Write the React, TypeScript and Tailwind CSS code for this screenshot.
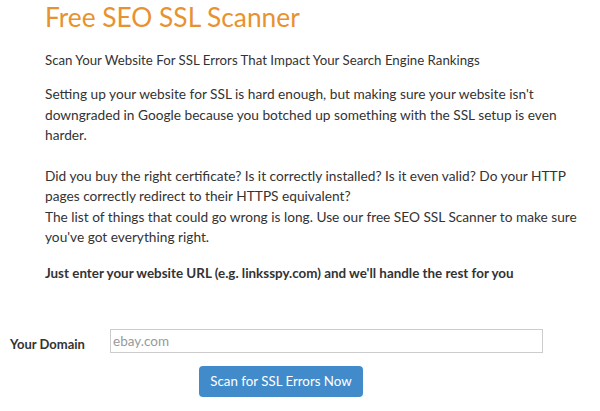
import React from "react";

export default function App() {
  return (
    <div className="w-[600px] h-[411px] bg-white overflow-hidden text-[#333333]" style={{ fontFamily: "Lato, 'Open Sans', sans-serif" }}>
      <div className="pl-[45px] whitespace-nowrap">
        <h1 className="text-[26.3px] leading-[34px] text-[#e8922f] font-normal">Free SEO SSL Scanner</h1>
        <p className="mt-[17px] text-[13.25px] leading-[18px]">Scan Your Website For SSL Errors That Impact Your Search Engine Rankings</p>
        <p className="mt-[15px] text-[13.7px] leading-[20.5px]">
          Setting up your website for SSL is hard enough, but making sure your website isn't
          <br />
          downgraded in Google because you botched up something with the SSL setup is even
          <br />
          harder.
        </p>
        <p className="mt-[20px] text-[13.7px] leading-[20.5px]">
          Did you buy the right certificate? Is it correctly installed? Is it even valid? Do your HTTP
          <br />
          pages correctly redirect to their HTTPS equivalent?
          <br />
          The list of things that could go wrong is long. Use our free SEO SSL Scanner to make sure
          <br />
          you've got everything right.
        </p>
        <p className="mt-[15px] text-[13.4px] leading-[20.5px] font-bold">
          Just enter your website URL (e.g. linksspy.com) and we'll handle the rest for you
        </p>
      </div>
      <div className="mt-[46px] flex items-start pl-[10px]">
        <label className="w-[100px] pt-[6px] text-[13px] leading-[18px] font-bold text-[#333333]">Your Domain</label>
        <input
          className="w-[433px] h-[24px] border border-[#cccccc] px-[2px] text-[13.5px] text-[#555] outline-none placeholder:text-[#999999]"
          placeholder="ebay.com"
          style={{ fontFamily: "Lato, sans-serif" }}
        />
      </div>
      <div className="mt-[13px] pl-[199px]">
        <button className="w-[164px] h-[31px] rounded-[4px] bg-[#428bca] text-white text-[13.3px] leading-none" style={{ fontFamily: "Lato, sans-serif" }}>
          Scan for SSL Errors Now
        </button>
      </div>
    </div>
  );
}
